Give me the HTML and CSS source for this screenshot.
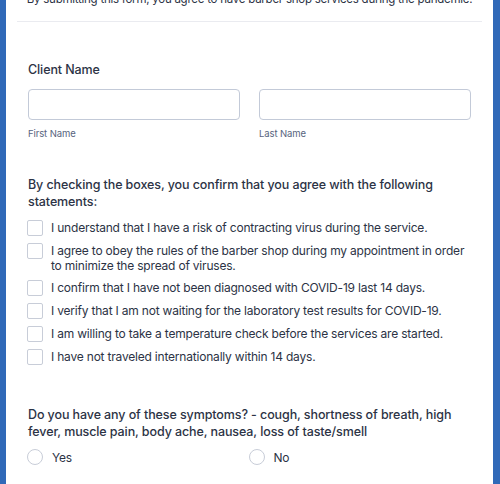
FILE: index.html
```html
<!DOCTYPE html>
<html lang="en">
<head>
<meta charset="utf-8">
<link rel="stylesheet" href="styles.css">
</head>
<body>
<div class="card">
  <div class="intro-wrap"><p class="intro">By submitting this form, you agree to have barber shop services during the pandemic.</p></div>
  <hr class="divider">
  <section class="field name-field">
    <h2 class="q">Client Name</h2>
    <div class="name-row">
      <label class="name-col"><span class="input"></span><span class="sub">First Name</span></label>
      <label class="name-col"><span class="input"></span><span class="sub">Last Name</span></label>
    </div>
  </section>
  <section class="field checks">
    <h2 class="q">By checking the boxes, you confirm that you agree with the following statements:</h2>
    <ul class="opts">
      <li class="opt"><span class="box"></span><span class="txt">I understand that I have a risk of contracting virus during the service.</span></li>
      <li class="opt"><span class="box"></span><span class="txt">I agree to obey the rules of the barber shop during my appointment in order to minimize the spread of viruses.</span></li>
      <li class="opt"><span class="box"></span><span class="txt">I confirm that I have not been diagnosed with COVID-19 last 14 days.</span></li>
      <li class="opt"><span class="box"></span><span class="txt">I verify that I am not waiting for the laboratory test results for COVID-19.</span></li>
      <li class="opt"><span class="box"></span><span class="txt">I am willing to take a temperature check before the services are started.</span></li>
      <li class="opt"><span class="box"></span><span class="txt">I have not traveled internationally within 14 days.</span></li>
    </ul>
  </section>
  <section class="field radios">
    <h2 class="q">Do you have any of these symptoms? - cough, shortness of breath, high fever, muscle pain, body ache, nausea, loss of taste/smell</h2>
    <div class="radio-row">
      <div class="opt"><span class="circle"></span><span class="txt">Yes</span></div>
      <div class="opt"><span class="circle"></span><span class="txt">No</span></div>
    </div>
  </section>
</div>
</body>
</html>
```
FILE: styles.css
```css
html, body {
  margin: 0;
  padding: 0;
}
body {
  background: #3069b8;
  font-family: Inter, "Noto Sans", "Liberation Sans", sans-serif;
  color: #2c3345;
  height: 484px;
  overflow: hidden;
}
.card {
  background: #fff;
  margin: 0 7px 0 6px;
  padding: 0 22px 40px;
  min-height: 600px;
  overflow: hidden;
}
.intro-wrap {
  display: flex;
  justify-content: center;
  margin-top: -11px;
}
.intro {
  flex: none;
  margin: 0;
  font-size: 11.5px;
  letter-spacing: -0.25px;
  line-height: 20px;
  white-space: nowrap;
  color: #2c3345;
}
.divider {
  border: 0;
  border-top: 1px solid #eaebf0;
  margin: 12px -11px 0;
}
.q {
  margin: 0;
  font-size: 12.5px;
  letter-spacing: -0.1px;
  font-weight: 500;
  line-height: 17px;
  color: #2c3345;
}
.name-field {
  padding-top: 39px;
}
.name-row {
  display: grid;
  grid-template-columns: 1fr 1fr;
  column-gap: 19px;
  margin-top: 11px;
}
.name-col {
  display: flex;
  flex-direction: column;
}
.input {
  height: 29px;
  border: 1px solid #c3cad8;
  border-radius: 4px;
}
.sub {
  font-size: 9.5px;
  letter-spacing: -0.1px;
  line-height: 14px;
  color: #57647e;
  margin-top: 7px;
}
.checks {
  padding-top: 35px;
}
.opts {
  list-style: none;
  margin: 10px 0 0;
  padding: 0;
  display: flex;
  flex-direction: column;
  gap: 7px;
}
.opt {
  display: flex;
  align-items: flex-start;
  gap: 8px;
  font-size: 12px;
  letter-spacing: -0.2px;
  line-height: 15px;
}
.box {
  flex: none;
  width: 14px;
  height: 14px;
  border: 1px solid #c8cdd8;
  border-radius: 2px;
  margin-left: -1px;
}
.radios {
  padding-top: 41px;
}
.radio-row {
  display: grid;
  grid-template-columns: 1fr 1fr;
  margin-top: 9px;
}
.radio-row .opt {
  align-items: center;
}
.circle {
  flex: none;
  width: 14px;
  height: 14px;
  border: 1px solid #c8cdd8;
  border-radius: 50%;
  margin-left: -1px;
}
.radio-row .txt {
  margin-left: 1px;
}
```
